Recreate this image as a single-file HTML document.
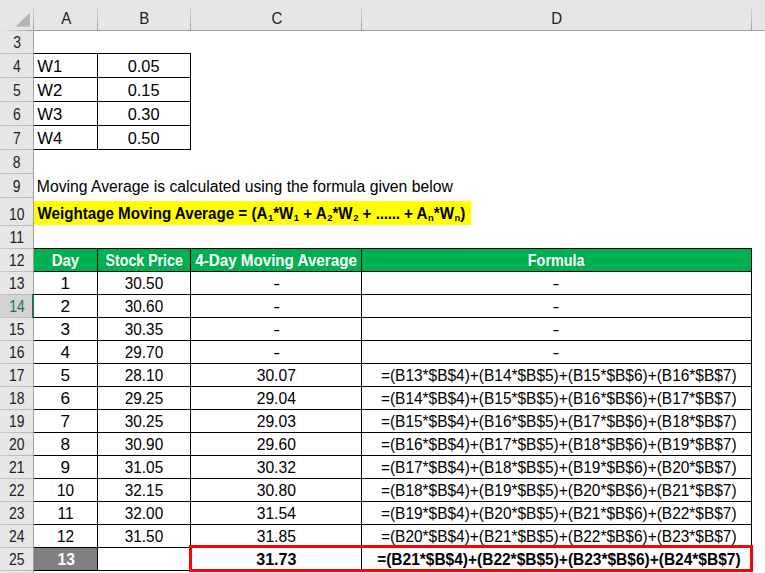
<!DOCTYPE html>
<html><head><meta charset="utf-8"><style>
html,body{margin:0;padding:0;}
body{width:765px;height:573px;position:relative;overflow:hidden;background:#fff;font-family:"Liberation Sans",sans-serif;}
.a{position:absolute;}
.t{position:absolute;white-space:nowrap;height:20px;line-height:20px;}
sub{font-size:62%;vertical-align:baseline;position:relative;top:2.5px;line-height:0;margin-left:0.5px;}
</style></head><body>
<div class="a" style="left:0;top:0;width:765px;height:30px;background:#e6e6e6"></div>
<div class="a" style="left:0;top:30px;width:33px;height:543px;background:#e6e6e6"></div>
<div class="a" style="left:0;top:295px;width:32px;height:22px;background:#d2d2d2"></div>
<div class="a" style="left:0;top:30px;width:765px;height:1px;background:linear-gradient(to right,#e6e6e6 0px,#a0a0a0 33px)"></div>
<div class="a" style="left:33px;top:8px;width:1px;height:22px;background:linear-gradient(#d6d6d6,#9e9e9e)"></div>
<div class="a" style="left:33px;top:30px;width:1px;height:543px;background:#9e9e9e"></div>
<div class="a" style="left:97px;top:8px;width:1px;height:22px;background:linear-gradient(#d6d6d6,#9e9e9e)"></div>
<div class="a" style="left:190px;top:8px;width:1px;height:22px;background:linear-gradient(#d6d6d6,#9e9e9e)"></div>
<div class="a" style="left:361px;top:8px;width:1px;height:22px;background:linear-gradient(#d6d6d6,#9e9e9e)"></div>
<div class="a" style="left:751px;top:8px;width:1px;height:22px;background:linear-gradient(#d6d6d6,#9e9e9e)"></div>
<svg class="a" style="left:0;top:0" width="33" height="30"><polygon points="15.5,26.7 30,26.7 30,12.5" fill="#b4b4b4"/></svg>
<div class="a" style="left:0;top:53px;width:33px;height:1px;background:linear-gradient(to right,#c8c8c8,#b4b4b4)"></div>
<div class="a" style="left:0;top:77px;width:33px;height:1px;background:linear-gradient(to right,#c8c8c8,#b4b4b4)"></div>
<div class="a" style="left:0;top:101px;width:33px;height:1px;background:linear-gradient(to right,#c8c8c8,#b4b4b4)"></div>
<div class="a" style="left:0;top:125px;width:33px;height:1px;background:linear-gradient(to right,#c8c8c8,#b4b4b4)"></div>
<div class="a" style="left:0;top:149px;width:33px;height:1px;background:linear-gradient(to right,#c8c8c8,#b4b4b4)"></div>
<div class="a" style="left:0;top:173px;width:33px;height:1px;background:linear-gradient(to right,#c8c8c8,#b4b4b4)"></div>
<div class="a" style="left:0;top:197px;width:33px;height:1px;background:linear-gradient(to right,#c8c8c8,#b4b4b4)"></div>
<div class="a" style="left:0;top:225px;width:33px;height:1px;background:linear-gradient(to right,#c8c8c8,#b4b4b4)"></div>
<div class="a" style="left:0;top:248px;width:33px;height:1px;background:linear-gradient(to right,#c8c8c8,#b4b4b4)"></div>
<div class="a" style="left:0;top:271px;width:33px;height:1px;background:linear-gradient(to right,#c8c8c8,#b4b4b4)"></div>
<div class="a" style="left:0;top:294px;width:33px;height:1px;background:linear-gradient(to right,#c8c8c8,#b4b4b4)"></div>
<div class="a" style="left:0;top:317px;width:33px;height:1px;background:linear-gradient(to right,#c8c8c8,#b4b4b4)"></div>
<div class="a" style="left:0;top:340px;width:33px;height:1px;background:linear-gradient(to right,#c8c8c8,#b4b4b4)"></div>
<div class="a" style="left:0;top:363px;width:33px;height:1px;background:linear-gradient(to right,#c8c8c8,#b4b4b4)"></div>
<div class="a" style="left:0;top:386px;width:33px;height:1px;background:linear-gradient(to right,#c8c8c8,#b4b4b4)"></div>
<div class="a" style="left:0;top:409px;width:33px;height:1px;background:linear-gradient(to right,#c8c8c8,#b4b4b4)"></div>
<div class="a" style="left:0;top:432px;width:33px;height:1px;background:linear-gradient(to right,#c8c8c8,#b4b4b4)"></div>
<div class="a" style="left:0;top:455px;width:33px;height:1px;background:linear-gradient(to right,#c8c8c8,#b4b4b4)"></div>
<div class="a" style="left:0;top:478px;width:33px;height:1px;background:linear-gradient(to right,#c8c8c8,#b4b4b4)"></div>
<div class="a" style="left:0;top:501px;width:33px;height:1px;background:linear-gradient(to right,#c8c8c8,#b4b4b4)"></div>
<div class="a" style="left:0;top:524px;width:33px;height:1px;background:linear-gradient(to right,#c8c8c8,#b4b4b4)"></div>
<div class="a" style="left:0;top:547px;width:33px;height:1px;background:linear-gradient(to right,#c8c8c8,#b4b4b4)"></div>
<div class="a" style="left:0;top:570px;width:33px;height:1px;background:linear-gradient(to right,#c8c8c8,#b4b4b4)"></div>
<div class="a" style="left:32px;top:294px;width:2px;height:24px;background:#217346"></div>
<div class="a" style="left:34px;top:53px;width:157px;height:1px;background:#000"></div>
<div class="a" style="left:34px;top:77px;width:157px;height:1px;background:#000"></div>
<div class="a" style="left:34px;top:101px;width:157px;height:1px;background:#000"></div>
<div class="a" style="left:34px;top:125px;width:157px;height:1px;background:#000"></div>
<div class="a" style="left:34px;top:149px;width:157px;height:1px;background:#000"></div>
<div class="a" style="left:97px;top:53px;width:1px;height:97px;background:#000"></div>
<div class="a" style="left:190px;top:53px;width:1px;height:97px;background:#000"></div>
<div class="a" style="left:34px;top:201px;width:437px;height:24px;background:#ffff00"></div>
<div class="a" style="left:34px;top:249px;width:717px;height:22px;background:#00b050"></div>
<div class="a" style="left:34px;top:548px;width:63px;height:22px;background:#808080"></div>
<div class="a" style="left:34px;top:248px;width:718px;height:1px;background:#000"></div>
<div class="a" style="left:34px;top:271px;width:718px;height:1px;background:#000"></div>
<div class="a" style="left:34px;top:294px;width:718px;height:1px;background:#000"></div>
<div class="a" style="left:34px;top:317px;width:718px;height:1px;background:#000"></div>
<div class="a" style="left:34px;top:340px;width:718px;height:1px;background:#000"></div>
<div class="a" style="left:34px;top:363px;width:718px;height:1px;background:#000"></div>
<div class="a" style="left:34px;top:386px;width:718px;height:1px;background:#000"></div>
<div class="a" style="left:34px;top:409px;width:718px;height:1px;background:#000"></div>
<div class="a" style="left:34px;top:432px;width:718px;height:1px;background:#000"></div>
<div class="a" style="left:34px;top:455px;width:718px;height:1px;background:#000"></div>
<div class="a" style="left:34px;top:478px;width:718px;height:1px;background:#000"></div>
<div class="a" style="left:34px;top:501px;width:718px;height:1px;background:#000"></div>
<div class="a" style="left:34px;top:524px;width:718px;height:1px;background:#000"></div>
<div class="a" style="left:34px;top:547px;width:718px;height:1px;background:#000"></div>
<div class="a" style="left:34px;top:570px;width:718px;height:1px;background:#000"></div>
<div class="a" style="left:97px;top:248px;width:1px;height:323px;background:#000"></div>
<div class="a" style="left:190px;top:248px;width:1px;height:323px;background:#000"></div>
<div class="a" style="left:361px;top:248px;width:1px;height:323px;background:#000"></div>
<div class="a" style="left:751px;top:248px;width:1px;height:323px;background:#000"></div>
<div class="t" id="colA" style="left:34px;width:63px;top:9.46px;font-size:16px;text-align:center;color:#222;transform-origin:31.50px 50%;transform:translateX(0.75px) scaleX(0.9400);">A</div>
<div class="t" id="colB" style="left:98px;width:92px;top:9.46px;font-size:16px;text-align:center;color:#222;transform-origin:46.50px 50%;transform:translateX(0.30px) scaleX(0.9400);">B</div>
<div class="t" id="colC" style="left:191px;width:170px;top:9.46px;font-size:16px;text-align:center;color:#222;transform-origin:85.00px 50%;transform:translateX(0.90px) scaleX(0.9400);">C</div>
<div class="t" id="colD" style="left:362px;width:389px;top:9.46px;font-size:16px;text-align:center;color:#222;transform-origin:195.00px 50%;transform:translateX(0.10px) scaleX(0.9400);">D</div>
<div class="t" id="rn3" style="left:0px;width:33px;top:33.46px;font-size:16px;text-align:center;color:#222;transform-origin:16.50px 50%;transform:translateX(0.52px) scaleX(0.8706);">3</div>
<div class="t" id="rn4" style="left:0px;width:33px;top:57.46px;font-size:16px;text-align:center;color:#222;transform-origin:16.50px 50%;transform:translateX(0.30px) scaleX(0.8706);">4</div>
<div class="t" id="rn5" style="left:0px;width:33px;top:81.46px;font-size:16px;text-align:center;color:#222;transform-origin:16.50px 50%;transform:translateX(0.30px) scaleX(0.8706);">5</div>
<div class="t" id="rn6" style="left:0px;width:33px;top:105.46px;font-size:16px;text-align:center;color:#222;transform-origin:16.50px 50%;transform:translateX(0.30px) scaleX(0.8706);">6</div>
<div class="t" id="rn7" style="left:0px;width:33px;top:129.46px;font-size:16px;text-align:center;color:#222;transform-origin:16.50px 50%;transform:translateX(0.30px) scaleX(0.8706);">7</div>
<div class="t" id="rn8" style="left:0px;width:33px;top:153.46px;font-size:16px;text-align:center;color:#222;transform-origin:16.00px 50%;transform:translateX(0.30px) scaleX(0.8706);">8</div>
<div class="t" id="rn9" style="left:0px;width:33px;top:177.46px;font-size:16px;text-align:center;color:#222;transform-origin:16.00px 50%;transform:translateX(0.30px) scaleX(0.8706);">9</div>
<div class="t" id="rn10" style="left:0px;width:33px;top:205.46px;font-size:16px;text-align:center;color:#222;transform-origin:16.50px 50%;transform:translateX(0.30px) scaleX(0.8706);">10</div>
<div class="t" id="rn11" style="left:0px;width:33px;top:228.46px;font-size:16px;text-align:center;color:#222;transform-origin:16.50px 50%;transform:translateX(0.30px) scaleX(0.8706);">11</div>
<div class="t" id="rn12" style="left:0px;width:33px;top:251.46px;font-size:16px;text-align:center;color:#222;transform-origin:16.50px 50%;transform:translateX(0.30px) scaleX(0.8706);">12</div>
<div class="t" id="rn13" style="left:0px;width:33px;top:274.46px;font-size:16px;text-align:center;color:#222;transform-origin:16.50px 50%;transform:translateX(0.30px) scaleX(0.8706);">13</div>
<div class="t" id="rn14" style="left:0px;width:33px;top:297.46px;font-size:16px;text-align:center;color:#217346;transform-origin:17.00px 50%;transform:translateX(0.55px) scaleX(0.8706);">14</div>
<div class="t" id="rn15" style="left:0px;width:33px;top:320.46px;font-size:16px;text-align:center;color:#222;transform-origin:16.50px 50%;transform:translateX(0.30px) scaleX(0.8706);">15</div>
<div class="t" id="rn16" style="left:0px;width:33px;top:343.46px;font-size:16px;text-align:center;color:#222;transform-origin:16.50px 50%;transform:translateX(0.30px) scaleX(0.8706);">16</div>
<div class="t" id="rn17" style="left:0px;width:33px;top:366.46px;font-size:16px;text-align:center;color:#222;transform-origin:16.50px 50%;transform:translateX(0.30px) scaleX(0.8706);">17</div>
<div class="t" id="rn18" style="left:0px;width:33px;top:389.46px;font-size:16px;text-align:center;color:#222;transform-origin:16.50px 50%;transform:translateX(0.30px) scaleX(0.8706);">18</div>
<div class="t" id="rn19" style="left:0px;width:33px;top:412.46px;font-size:16px;text-align:center;color:#222;transform-origin:16.50px 50%;transform:translateX(0.30px) scaleX(0.8706);">19</div>
<div class="t" id="rn20" style="left:0px;width:33px;top:435.46px;font-size:16px;text-align:center;color:#222;transform-origin:16.50px 50%;transform:translateX(0.30px) scaleX(0.8706);">20</div>
<div class="t" id="rn21" style="left:0px;width:33px;top:458.46px;font-size:16px;text-align:center;color:#222;transform-origin:16.50px 50%;transform:translateX(0.30px) scaleX(0.8706);">21</div>
<div class="t" id="rn22" style="left:0px;width:33px;top:481.46px;font-size:16px;text-align:center;color:#222;transform-origin:16.50px 50%;transform:translateX(0.30px) scaleX(0.8706);">22</div>
<div class="t" id="rn23" style="left:0px;width:33px;top:504.46px;font-size:16px;text-align:center;color:#222;transform-origin:16.50px 50%;transform:translateX(0.30px) scaleX(0.8706);">23</div>
<div class="t" id="rn24" style="left:0px;width:33px;top:527.46px;font-size:16px;text-align:center;color:#222;transform-origin:16.50px 50%;transform:translateX(0.30px) scaleX(0.8706);">24</div>
<div class="t" id="rn25" style="left:0px;width:33px;top:550.46px;font-size:16px;text-align:center;color:#222;transform-origin:16.50px 50%;transform:translateX(0.30px) scaleX(0.8706);">25</div>
<div class="t" id="w0" style="left:37px;width:60px;top:57.46px;font-size:16px;text-align:left;color:#000;transform-origin:0.00px 50%;transform:translateX(0.30px) scaleX(1.0391);">W1</div>
<div class="t" id="wv0" style="left:98px;width:92px;top:57.46px;font-size:16px;text-align:center;color:#000;transform-origin:46.00px 50%;transform:translateX(-0.40px) scaleX(1.0200);">0.05</div>
<div class="t" id="w1" style="left:37px;width:60px;top:81.46px;font-size:16px;text-align:left;color:#000;transform-origin:0.00px 50%;transform:translateX(0.30px) scaleX(1.0391);">W2</div>
<div class="t" id="wv1" style="left:98px;width:92px;top:81.46px;font-size:16px;text-align:center;color:#000;transform-origin:46.00px 50%;transform:translateX(-0.40px) scaleX(1.0200);">0.15</div>
<div class="t" id="w2" style="left:37px;width:60px;top:105.46px;font-size:16px;text-align:left;color:#000;transform-origin:0.00px 50%;transform:translateX(0.30px) scaleX(1.0391);">W3</div>
<div class="t" id="wv2" style="left:98px;width:92px;top:105.46px;font-size:16px;text-align:center;color:#000;transform-origin:46.00px 50%;transform:translateX(-0.40px) scaleX(1.0200);">0.30</div>
<div class="t" id="w3" style="left:37px;width:60px;top:129.46px;font-size:16px;text-align:left;color:#000;transform-origin:0.00px 50%;transform:translateX(0.30px) scaleX(1.0391);">W4</div>
<div class="t" id="wv3" style="left:98px;width:92px;top:129.46px;font-size:16px;text-align:center;color:#000;transform-origin:46.00px 50%;transform:translateX(-0.40px) scaleX(1.0200);">0.50</div>
<div class="t" id="row9" style="left:37px;width:723px;top:177.46px;font-size:16px;text-align:left;color:#000;transform-origin:1.00px 50%;transform:translateX(-0.20px) scaleX(0.9832);">Moving Average is calculated using the formula given below</div>
<div class="t" id="row10" style="left:37px;width:723px;top:203.96px;font-size:16px;text-align:left;color:#000;font-weight:bold;transform-origin:0.00px 50%;transform:translateX(0.50px) scaleX(0.9480);">Weightage Moving Average = (A<sub>1</sub>*W<sub>1</sub> + A<sub>2</sub>*W<sub>2</sub> + <span style="letter-spacing:-0.2px">......</span> + A<sub>n</sub>*W<sub>n</sub>)</div>
<div class="t" id="hA" style="left:34px;width:63px;top:251.46px;font-size:16px;text-align:center;color:#fff;font-weight:bold;transform-origin:32.00px 50%;transform:translateX(-0.10px) scaleX(0.9357);">Day</div>
<div class="t" id="hB" style="left:98px;width:92px;top:251.46px;font-size:16px;text-align:center;color:#fff;font-weight:bold;transform-origin:46.00px 50%;transform:translateX(0.20px) scaleX(0.8860);">Stock Price</div>
<div class="t" id="hC" style="left:191px;width:170px;top:251.46px;font-size:16px;text-align:center;color:#fff;font-weight:bold;transform-origin:85.00px 50%;transform:translateX(-0.15px) scaleX(0.9482);">4-Day Moving Average</div>
<div class="t" id="hD" style="left:362px;width:389px;top:251.46px;font-size:16px;text-align:center;color:#fff;font-weight:bold;transform-origin:195.50px 50%;transform:translateX(-0.45px) scaleX(0.8968);">Formula</div>
<div class="t" id="day0" style="left:34px;width:63px;top:274.46px;font-size:16px;text-align:center;color:#000;transform-origin:31.50px 50%;transform:translateX(-0.15px) scaleX(1.0714);">1</div>
<div class="t" id="pr0" style="left:98px;width:92px;top:274.46px;font-size:16px;text-align:center;color:#000;transform-origin:46.00px 50%;transform:translateX(0.00px) scaleX(0.9600);">30.50</div>
<div class="t" id="mv0" style="left:191px;width:170px;top:274.46px;font-size:16px;text-align:center;color:#000;transform-origin:85.00px 50%;transform:translateX(0.55px) scaleX(1.2750);">-</div>
<div class="t" id="fd0" style="left:362px;width:389px;top:274.46px;font-size:16px;text-align:center;color:#000;transform-origin:194.50px 50%;transform:translateX(-0.50px) scaleX(1.2750);">-</div>
<div class="t" id="day1" style="left:34px;width:63px;top:297.46px;font-size:16px;text-align:center;color:#000;transform-origin:31.00px 50%;transform:translateX(-0.15px) scaleX(1.0714);">2</div>
<div class="t" id="pr1" style="left:98px;width:92px;top:297.46px;font-size:16px;text-align:center;color:#000;transform-origin:46.00px 50%;transform:translateX(0.00px) scaleX(0.9600);">30.60</div>
<div class="t" id="mv1" style="left:191px;width:170px;top:297.46px;font-size:16px;text-align:center;color:#000;transform-origin:85.00px 50%;transform:translateX(0.55px) scaleX(1.2750);">-</div>
<div class="t" id="fd1" style="left:362px;width:389px;top:297.46px;font-size:16px;text-align:center;color:#000;transform-origin:194.50px 50%;transform:translateX(-0.50px) scaleX(1.2750);">-</div>
<div class="t" id="day2" style="left:34px;width:63px;top:320.46px;font-size:16px;text-align:center;color:#000;transform-origin:31.50px 50%;transform:translateX(-0.15px) scaleX(1.0714);">3</div>
<div class="t" id="pr2" style="left:98px;width:92px;top:320.46px;font-size:16px;text-align:center;color:#000;transform-origin:46.00px 50%;transform:translateX(0.00px) scaleX(0.9600);">30.35</div>
<div class="t" id="mv2" style="left:191px;width:170px;top:320.46px;font-size:16px;text-align:center;color:#000;transform-origin:85.00px 50%;transform:translateX(0.55px) scaleX(1.2750);">-</div>
<div class="t" id="fd2" style="left:362px;width:389px;top:320.46px;font-size:16px;text-align:center;color:#000;transform-origin:194.50px 50%;transform:translateX(-0.50px) scaleX(1.2750);">-</div>
<div class="t" id="day3" style="left:34px;width:63px;top:343.46px;font-size:16px;text-align:center;color:#000;transform-origin:31.50px 50%;transform:translateX(-0.15px) scaleX(1.0714);">4</div>
<div class="t" id="pr3" style="left:98px;width:92px;top:343.46px;font-size:16px;text-align:center;color:#000;transform-origin:46.00px 50%;transform:translateX(0.00px) scaleX(0.9600);">29.70</div>
<div class="t" id="mv3" style="left:191px;width:170px;top:343.46px;font-size:16px;text-align:center;color:#000;transform-origin:85.00px 50%;transform:translateX(0.55px) scaleX(1.2750);">-</div>
<div class="t" id="fd3" style="left:362px;width:389px;top:343.46px;font-size:16px;text-align:center;color:#000;transform-origin:194.50px 50%;transform:translateX(-0.50px) scaleX(1.2750);">-</div>
<div class="t" id="day4" style="left:34px;width:63px;top:366.46px;font-size:16px;text-align:center;color:#000;transform-origin:32.00px 50%;transform:translateX(-0.15px) scaleX(1.0714);">5</div>
<div class="t" id="pr4" style="left:98px;width:92px;top:366.46px;font-size:16px;text-align:center;color:#000;transform-origin:46.00px 50%;transform:translateX(0.00px) scaleX(0.9600);">28.10</div>
<div class="t" id="mv4" style="left:191px;width:170px;top:366.46px;font-size:16px;text-align:center;color:#000;transform-origin:84.50px 50%;transform:translateX(0.30px) scaleX(0.9795);">30.07</div>
<div class="t" id="fd4" style="left:362px;width:389px;top:366.46px;font-size:16px;text-align:center;color:#000;transform-origin:194.50px 50%;transform:translateX(2.25px) scaleX(0.9659);">=(B13*$B$4)+(B14*$B$5)+(B15*$B$6)+(B16*$B$7)</div>
<div class="t" id="day5" style="left:34px;width:63px;top:389.46px;font-size:16px;text-align:center;color:#000;transform-origin:31.50px 50%;transform:translateX(-0.15px) scaleX(1.0714);">6</div>
<div class="t" id="pr5" style="left:98px;width:92px;top:389.46px;font-size:16px;text-align:center;color:#000;transform-origin:46.00px 50%;transform:translateX(0.00px) scaleX(0.9600);">29.25</div>
<div class="t" id="mv5" style="left:191px;width:170px;top:389.46px;font-size:16px;text-align:center;color:#000;transform-origin:85.00px 50%;transform:translateX(0.30px) scaleX(0.9795);">29.04</div>
<div class="t" id="fd5" style="left:362px;width:389px;top:389.46px;font-size:16px;text-align:center;color:#000;transform-origin:194.50px 50%;transform:translateX(2.25px) scaleX(0.9659);">=(B14*$B$4)+(B15*$B$5)+(B16*$B$6)+(B17*$B$7)</div>
<div class="t" id="day6" style="left:34px;width:63px;top:412.46px;font-size:16px;text-align:center;color:#000;transform-origin:31.00px 50%;transform:translateX(-0.15px) scaleX(1.0714);">7</div>
<div class="t" id="pr6" style="left:98px;width:92px;top:412.46px;font-size:16px;text-align:center;color:#000;transform-origin:46.00px 50%;transform:translateX(0.00px) scaleX(0.9600);">30.25</div>
<div class="t" id="mv6" style="left:191px;width:170px;top:412.46px;font-size:16px;text-align:center;color:#000;transform-origin:85.00px 50%;transform:translateX(0.30px) scaleX(0.9795);">29.03</div>
<div class="t" id="fd6" style="left:362px;width:389px;top:412.46px;font-size:16px;text-align:center;color:#000;transform-origin:194.50px 50%;transform:translateX(2.25px) scaleX(0.9659);">=(B15*$B$4)+(B16*$B$5)+(B17*$B$6)+(B18*$B$7)</div>
<div class="t" id="day7" style="left:34px;width:63px;top:435.46px;font-size:16px;text-align:center;color:#000;transform-origin:31.50px 50%;transform:translateX(-0.15px) scaleX(1.0714);">8</div>
<div class="t" id="pr7" style="left:98px;width:92px;top:435.46px;font-size:16px;text-align:center;color:#000;transform-origin:46.00px 50%;transform:translateX(0.00px) scaleX(0.9600);">30.90</div>
<div class="t" id="mv7" style="left:191px;width:170px;top:435.46px;font-size:16px;text-align:center;color:#000;transform-origin:85.00px 50%;transform:translateX(0.30px) scaleX(0.9795);">29.60</div>
<div class="t" id="fd7" style="left:362px;width:389px;top:435.46px;font-size:16px;text-align:center;color:#000;transform-origin:194.50px 50%;transform:translateX(2.25px) scaleX(0.9659);">=(B16*$B$4)+(B17*$B$5)+(B18*$B$6)+(B19*$B$7)</div>
<div class="t" id="day8" style="left:34px;width:63px;top:458.46px;font-size:16px;text-align:center;color:#000;transform-origin:31.00px 50%;transform:translateX(-0.15px) scaleX(1.0714);">9</div>
<div class="t" id="pr8" style="left:98px;width:92px;top:458.46px;font-size:16px;text-align:center;color:#000;transform-origin:46.00px 50%;transform:translateX(0.00px) scaleX(0.9600);">31.05</div>
<div class="t" id="mv8" style="left:191px;width:170px;top:458.46px;font-size:16px;text-align:center;color:#000;transform-origin:84.50px 50%;transform:translateX(0.30px) scaleX(0.9795);">30.32</div>
<div class="t" id="fd8" style="left:362px;width:389px;top:458.46px;font-size:16px;text-align:center;color:#000;transform-origin:194.50px 50%;transform:translateX(2.25px) scaleX(0.9659);">=(B17*$B$4)+(B18*$B$5)+(B19*$B$6)+(B20*$B$7)</div>
<div class="t" id="day9" style="left:34px;width:63px;top:481.46px;font-size:16px;text-align:center;color:#000;transform-origin:31.50px 50%;transform:translateX(0.00px) scaleX(0.9600);">10</div>
<div class="t" id="pr9" style="left:98px;width:92px;top:481.46px;font-size:16px;text-align:center;color:#000;transform-origin:46.00px 50%;transform:translateX(0.00px) scaleX(0.9600);">32.15</div>
<div class="t" id="mv9" style="left:191px;width:170px;top:481.46px;font-size:16px;text-align:center;color:#000;transform-origin:85.00px 50%;transform:translateX(0.30px) scaleX(0.9795);">30.80</div>
<div class="t" id="fd9" style="left:362px;width:389px;top:481.46px;font-size:16px;text-align:center;color:#000;transform-origin:194.50px 50%;transform:translateX(2.25px) scaleX(0.9659);">=(B18*$B$4)+(B19*$B$5)+(B20*$B$6)+(B21*$B$7)</div>
<div class="t" id="day10" style="left:34px;width:63px;top:504.46px;font-size:16px;text-align:center;color:#000;transform-origin:31.50px 50%;transform:translateX(0.00px) scaleX(0.9600);">11</div>
<div class="t" id="pr10" style="left:98px;width:92px;top:504.46px;font-size:16px;text-align:center;color:#000;transform-origin:46.00px 50%;transform:translateX(0.00px) scaleX(0.9600);">32.00</div>
<div class="t" id="mv10" style="left:191px;width:170px;top:504.46px;font-size:16px;text-align:center;color:#000;transform-origin:85.00px 50%;transform:translateX(0.30px) scaleX(0.9795);">31.54</div>
<div class="t" id="fd10" style="left:362px;width:389px;top:504.46px;font-size:16px;text-align:center;color:#000;transform-origin:194.50px 50%;transform:translateX(2.25px) scaleX(0.9659);">=(B19*$B$4)+(B20*$B$5)+(B21*$B$6)+(B22*$B$7)</div>
<div class="t" id="day11" style="left:34px;width:63px;top:527.46px;font-size:16px;text-align:center;color:#000;transform-origin:31.50px 50%;transform:translateX(0.00px) scaleX(0.9600);">12</div>
<div class="t" id="pr11" style="left:98px;width:92px;top:527.46px;font-size:16px;text-align:center;color:#000;transform-origin:46.00px 50%;transform:translateX(0.00px) scaleX(0.9600);">31.50</div>
<div class="t" id="mv11" style="left:191px;width:170px;top:527.46px;font-size:16px;text-align:center;color:#000;transform-origin:85.00px 50%;transform:translateX(0.30px) scaleX(0.9795);">31.85</div>
<div class="t" id="fd11" style="left:362px;width:389px;top:527.46px;font-size:16px;text-align:center;color:#000;transform-origin:194.50px 50%;transform:translateX(2.25px) scaleX(0.9659);">=(B20*$B$4)+(B21*$B$5)+(B22*$B$6)+(B23*$B$7)</div>
<div class="t" id="b13" style="left:34px;width:63px;top:550.46px;font-size:16px;text-align:center;color:#fff;font-weight:bold;transform-origin:31.50px 50%;transform:translateX(0.70px) scaleX(0.9765);">13</div>
<div class="t" id="b3173" style="left:191px;width:170px;top:550.46px;font-size:16px;text-align:center;color:#000;font-weight:bold;transform-origin:85.00px 50%;transform:translateX(0.35px) scaleX(1.0075);">31.73</div>
<div class="t" id="bform" style="left:362px;width:389px;top:550.46px;font-size:16px;text-align:center;color:#000;font-weight:bold;transform-origin:194.50px 50%;transform:translateX(2.35px) scaleX(0.9683);">=(B21*$B$4)+(B22*$B$5)+(B23*$B$6)+(B24*$B$7)</div>
<div class="a" style="left:189px;top:545px;width:558px;height:21px;border:3px solid #ff0000"></div>
</body></html>
